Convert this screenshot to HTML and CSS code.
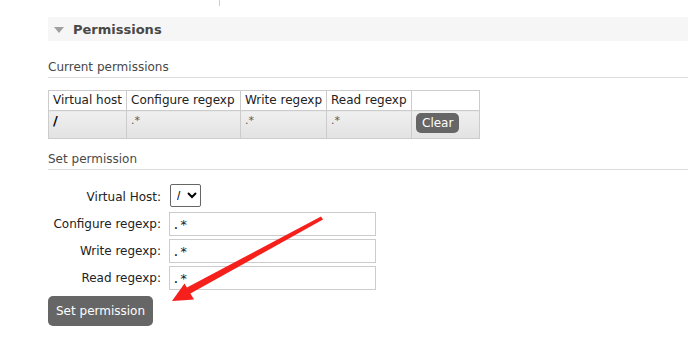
FILE: index.html
```html
<!DOCTYPE html>
<html lang="en">
<head>
  <meta charset="UTF-8" />
  <title>Permissions</title>
  <link rel="stylesheet" href="styles.css">
</head>
<body>
<div class="main-wrap">
  <div class="stub"></div>

  <div class="section-head">
    <span class="toggle"></span>
    <h2 class="section-title">Permissions</h2>
  </div>

  <h3 class="sub-title">Current permissions</h3>
  <table class="perm-table">
    <thead>
      <tr>
        <th class="col-vhost">Virtual host</th>
        <th class="col-conf">Configure regexp</th>
        <th class="col-write">Write regexp</th>
        <th class="col-read">Read regexp</th>
        <th class="col-act"></th>
      </tr>
    </thead>
    <tbody>
      <tr>
        <td class="vhost">/</td>
        <td><span class="code">.*</span></td>
        <td><span class="code">.*</span></td>
        <td><span class="code">.*</span></td>
        <td><button class="btn btn-small" type="button">Clear</button></td>
      </tr>
    </tbody>
  </table>

  <h3 class="sub-title sub-title-2">Set permission</h3>
  <form class="perm-form">
    <label class="form-label">Virtual Host:</label>
    <div class="form-field">
      <select class="form-select">
        <option>/</option>
      </select>
    </div>

    <label class="form-label">Configure regexp:</label>
    <div class="form-field"><input type="text" class="form-input" value=".*" /></div>

    <label class="form-label">Write regexp:</label>
    <div class="form-field"><input type="text" class="form-input" value=".*" /></div>

    <label class="form-label">Read regexp:</label>
    <div class="form-field"><input type="text" class="form-input" value=".*" /></div>
  </form>
  <button class="btn btn-big" type="button">Set permission</button>
</div>

<!-- annotation arrow drawn over the form -->
<svg class="arrow" width="688" height="342" viewBox="0 0 688 342">
  <polygon fill="#f5201c" points="321,216.5 323,219.5 189.5,294 186,288" />
  <polygon fill="#f5201c" points="172,301 184.5,283.5 194,299.5" />
</svg>
</body>
</html>
```

FILE: styles.css
```css
body, html {
  margin: 0;
  padding: 0;
  background: #fff;
  font-family: "DejaVu Sans", Verdana, sans-serif;
  font-size: 12px;
  color: #484848;
}
.main-wrap {
  padding-left: 48px;
}
.stub {
  margin-left: 171px;
  width: 1px;
  height: 6px;
  background: #ccc;
}
.section-head {
  margin-top: 11px;
  height: 24px;
  background: #f6f6f6;
  display: flex;
  align-items: center;
  padding-left: 6px;
}
.toggle {
  width: 0;
  height: 0;
  border-left: 5px solid transparent;
  border-right: 5px solid transparent;
  border-top: 6px solid #a0a0a0;
  margin-top: 1px;
}
.section-title {
  margin: 0 0 0 9px;
  font-size: 13px;
  font-weight: bold;
  color: #484848;
}
.sub-title {
  margin: 19px 0 0;
  padding-bottom: 2px;
  border-bottom: 1px solid #ddd;
  font-size: 12px;
  line-height: 15px;
  font-weight: normal;
  color: #484848;
}
.sub-title-2 {
  margin-top: 13px;
}
.perm-table {
  margin-top: 12px;
  border-collapse: collapse;
  table-layout: fixed;
  width: 431px;
}
.perm-table th, .perm-table td {
  border: 1px solid #ccc;
  padding: 2px 4px;
  text-align: left;
  line-height: 15px;
  white-space: nowrap;
  vertical-align: top;
}
.perm-table th {
  font-weight: normal;
  color: #222;
  background: #fff;
}
.perm-table td {
  padding-bottom: 5px;
  background: linear-gradient(#f0f0f0, #e2e2e2);
}
.col-vhost { width: 69px; }
.col-conf { width: 105px; }
.col-write { width: 77px; }
.col-read { width: 76px; }
.col-act { width: 59px; }
.vhost {
  font-weight: bold;
  color: #000;
  font-size: 13px;
}
.code {
  font-size: 11px;
  color: #555;
}
.btn {
  background: #666;
  color: #fff;
  border: none;
  border-radius: 5px;
  font-family: "DejaVu Sans", Verdana, sans-serif;
  font-size: 12px;
  cursor: pointer;
}
.btn-small {
  height: 20px;
  padding: 0 6px;
}
.btn-big {
  display: block;
  margin-top: 6px;
  height: 30px;
  padding: 0 8px;
}
.perm-form {
  margin-top: 14px;
  display: grid;
  grid-template-columns: 113px 207px;
  column-gap: 8px;
  row-gap: 3px;
  align-items: center;
}
.form-label {
  text-align: right;
  color: #222;
}
.form-select {
  margin-left: 1px;
  margin-bottom: 2px;
  height: 23px;
  width: 31px;
  border: 1px solid #666;
  border-radius: 2px;
  background: #fff;
  font-size: 12px;
  padding: 0 2px;
}
.form-input {
  width: 207px;
  height: 24px;
  box-sizing: border-box;
  border: 1px solid #ccc;
  padding: 0 2px;
  font-family: "DejaVu Sans Mono", monospace;
  font-size: 13px;
  color: #222;
}
.arrow {
  position: absolute;
  left: 0;
  top: 0;
  pointer-events: none;
}
```
